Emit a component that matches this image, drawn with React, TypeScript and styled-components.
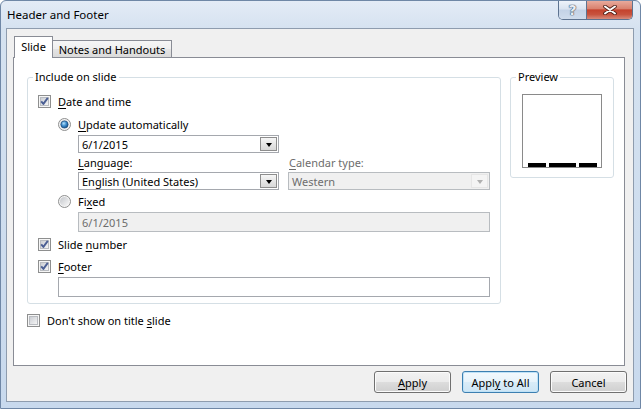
import React from 'react';
import styled, { createGlobalStyle } from 'styled-components';

const GlobalStyle = createGlobalStyle`
    * { box-sizing: border-box; }
    html, body { margin: 0; padding: 0; background: #ffffff; }
    body {
        font-family: 'Noto Sans', 'Open Sans', 'Liberation Sans', sans-serif;
        font-size: 11px;
        color: #000;
    }
    u { text-underline-offset: 2px; }
`;

const Window = styled.div`
    width: 641px;
    height: 409px;
    display: flex;
    flex-direction: column;
    border: 1px solid #6f87a6;
    border-radius: 6px 6px 0 0;
    background: linear-gradient(180deg, #e3ebf6 0px, #d5e2f0 28px, #c8d9ed 100%);
    overflow: hidden;
`;

const TitleBar = styled.div`
    flex: none;
    height: 27px;
    display: flex;
    align-items: flex-start;
`;

const Title = styled.div`
    align-self: center;
    padding-left: 6px;
    font-size: 11.5px;
    line-height: 16px;
`;

const CaptionButtons = styled.div`
    margin-left: auto;
    margin-right: 7px;
    display: flex;
    height: 19px;
    border: 1px solid #5d7390;
    border-top: none;
    border-radius: 0 0 5px 5px;
    overflow: hidden;
`;

const HelpButton = styled.div`
    width: 28px;
    border-right: 1px solid #5d7390;
    display: flex;
    align-items: center;
    justify-content: center;
    background: linear-gradient(180deg, #eef3fa 0%, #d9e3f0 45%, #c3d2e6 50%, #cfdcec 100%);
    color: #e9edf3;
    font-family: 'DejaVu Sans', sans-serif;
    font-weight: bold;
    font-size: 14px;
    line-height: 1;
    text-shadow: 0 0 1px #3e4e64, 0 0 1px #3e4e64, 0 0 1px #3e4e64;
`;

const CloseButton = styled.div`
    width: 45px;
    display: flex;
    align-items: center;
    justify-content: center;
    background: linear-gradient(180deg, #e8aa9c 0%, #d9826f 42%, #c4432e 50%, #c8533e 75%, #d78b7b 100%);
`;

const Client = styled.div`
    flex: 1;
    margin: 0 6px 6px 5px;
    border: 1px solid #8e9cae;
    background: #f0f0f0;
    display: flex;
    flex-direction: column;
    padding: 7px 0 0 6px;
`;

const TabStrip = styled.div`
    height: 21px;
    display: flex;
    align-items: flex-end;
    padding-left: 1px;
`;

const Tab = styled.div<{ $active?: boolean }>`
    position: relative;
    z-index: 1;
    display: flex;
    align-items: center;
    justify-content: center;
    border: 1px solid #898c95;
    border-bottom: none;
    height: ${p => (p.$active ? '22px' : '17px')};
    margin-bottom: ${p => (p.$active ? '-1px' : '0')};
    padding: ${p => (p.$active ? '0 0 2px' : '1px 0 0')};
    width: ${p => (p.$active ? '39px' : '119px')};
    border-left: ${p => (p.$active ? '1px solid #898c95' : 'none')};
    background: ${p => (p.$active ? '#ffffff' : 'linear-gradient(180deg, #f6f6f6 0%, #efefef 50%, #e4e4e4 51%, #dadada 100%)')};
`;

const Panel = styled.div`
    width: 612px;
    height: 309px;
    border: 1px solid #898c95;
    background: #ffffff;
    padding: 12px 0 0 13px;
    display: grid;
    grid-template-columns: 474px 104px;
    column-gap: 9px;
    align-content: start;
    align-items: start;
`;

const Group = styled.fieldset`
    margin: 0;
    padding: 0;
    min-width: 0;
    border: 1px solid #d5dfe5;
    border-radius: 3px;
`;

const Legend = styled.legend`
    margin-left: 5px;
    padding: 0 2px;
    line-height: 14px;
`;

const GroupBody = styled.div<{ $pad: string }>`
    display: flex;
    flex-direction: column;
    padding: ${p => p.$pad};
`;

const OptionRow = styled.label<{ $indent?: number; $gap?: number }>`
    display: flex;
    align-items: center;
    gap: 7px;
    height: 22px;
    margin-left: ${p => p.$indent ?? 0}px;
    margin-top: ${p => p.$gap ?? 0}px;
`;

const FieldGrid = styled.div`
    margin-left: 40px;
    display: grid;
    grid-template-columns: 201px 202px;
    column-gap: 9px;
`;

const FieldLabel = styled.div<{ $disabled?: boolean }>`
    height: 19px;
    display: flex;
    align-items: center;
    padding-left: ${p => (p.$disabled ? '1px' : '0')};
    color: ${p => (p.$disabled ? '#6d6d6d' : '#000')};
`;

const Combo = styled.div<{ $disabled?: boolean; $indent?: number; $width?: number }>`
    display: flex;
    align-items: center;
    height: 18px;
    width: ${p => (p.$width ? `${p.$width}px` : 'auto')};
    margin-left: ${p => p.$indent ?? 0}px;
    border: 1px solid ${p => (p.$disabled ? '#b8bcc0' : '#a5a8ae')};
    background: ${p => (p.$disabled ? '#f0f0f0' : '#ffffff')};
    color: ${p => (p.$disabled ? '#6d6d6d' : '#000')};
    padding-left: 3px;
`;

const ComboText = styled.span`
    flex: 1;
    white-space: nowrap;
`;

const ArrowButton = styled.div<{ $disabled?: boolean }>`
    width: 17px;
    height: 14px;
    margin-right: 1px;
    display: flex;
    align-items: center;
    justify-content: center;
    border: 1px solid ${p => (p.$disabled ? '#e6e6e6' : '#8d8d8d')};
    background: ${p => (p.$disabled ? '#f4f4f4' : 'linear-gradient(180deg, #f6f6f6 0%, #e6e6e6 50%, #d8d8d8 100%)')};
`;

const Arrow = styled.span<{ $disabled?: boolean }>`
    width: 0;
    height: 0;
    border-left: 3.5px solid transparent;
    border-right: 3.5px solid transparent;
    border-top: 4px solid ${p => (p.$disabled ? '#b0b0b0' : '#000')};
    margin-top: 1px;
`;

const TextBox = styled.div<{ $disabled?: boolean; $indent: number }>`
    height: 20px;
    margin-left: ${p => p.$indent}px;
    display: flex;
    align-items: center;
    padding-left: 3px;
    border: 1px solid ${p => (p.$disabled ? '#b8bcc0' : '#a5a8ae')};
    background: ${p => (p.$disabled ? '#f0f0f0' : '#ffffff')};
    color: #6d6d6d;
`;

const PreviewPage = styled.div`
    width: 80px;
    height: 74px;
    border: 1px solid #8a8a8a;
    background: #ffffff;
    display: flex;
    align-items: flex-end;
    gap: 3px;
    padding-left: 5px;
`;

const FooterBar = styled.div<{ $w: number }>`
    width: ${p => p.$w}px;
    height: 4px;
    background: #000;
`;

const BottomRow = styled.label`
    grid-column: 1;
    display: flex;
    align-items: center;
    gap: 7px;
    height: 22px;
    margin-top: 5px;
`;

const ButtonRow = styled.div`
    display: flex;
    justify-content: flex-end;
    gap: 11px;
    margin-top: 5px;
    padding-right: 6px;
`;

const Button = styled.div<{ $default?: boolean }>`
    width: 77px;
    height: 22px;
    display: flex;
    align-items: center;
    justify-content: center;
    border-radius: 3px;
    border: 1px solid ${p => (p.$default ? '#3c7fb1' : '#707070')};
    background: ${p =>
        p.$default
            ? 'linear-gradient(180deg, #f3f9fd 0%, #e7f3fb 50%, #d9ecf8 51%, #cde5f5 100%)'
            : 'linear-gradient(180deg, #f2f2f2 0%, #ebebeb 50%, #dddddd 51%, #cfcfcf 100%)'};
    box-shadow: inset 0 0 0 1px ${p => (p.$default ? '#bfe2f7' : '#fbfbfb')};
`;

const CheckBox = ({ checked }: { checked?: boolean }) => (
    <svg width="13" height="13" viewBox="0 0 13 13">
        <defs>
            <linearGradient id="cbFill" x1="0" y1="0" x2="1" y2="1">
                <stop offset="0" stopColor="#c9ccd2" />
                <stop offset="1" stopColor="#f7f7f7" />
            </linearGradient>
        </defs>
        <rect x="0.5" y="0.5" width="12" height="12" fill="#f6f6f6" stroke="#8e8f8f" />
        <rect x="2.5" y="2.5" width="8" height="8" fill="url(#cbFill)" stroke="#b9bcc1" />
        {checked && (
            <path d="M3.2 6.3 L5.4 8.9 L9.8 2.9" fill="none" stroke="#4b5f94" strokeWidth="1.9" strokeLinejoin="round" />
        )}
    </svg>
);

const Radio = ({ checked }: { checked?: boolean }) => (
    <svg width="13" height="13" viewBox="0 0 13 13">
        <defs>
            <linearGradient id="rdFill" x1="0" y1="0" x2="1" y2="1">
                <stop offset="0" stopColor="#c4c7cc" />
                <stop offset="1" stopColor="#f8f8f8" />
            </linearGradient>
            <radialGradient id="rdDot" cx="0.4" cy="0.35" r="0.7">
                <stop offset="0" stopColor="#b6e2fb" />
                <stop offset="0.5" stopColor="#3d8ccd" />
                <stop offset="1" stopColor="#10477e" />
            </radialGradient>
        </defs>
        <circle cx="6.5" cy="6.5" r="6" fill="#f4f4f4" stroke="#8e8f8f" />
        <circle cx="6.5" cy="6.5" r="4.5" fill="url(#rdFill)" />
        {checked && <circle cx="6.5" cy="6.5" r="3.6" fill="url(#rdDot)" stroke="#1b4c7c" strokeWidth="0.7" />}
    </svg>
);

const CloseGlyph = () => (
    <svg width="14" height="10" viewBox="0 0 14 10">
        <path d="M2 1.5 L12 8.5 M12 1.5 L2 8.5" stroke="#4b1d15" strokeWidth="3.6" strokeLinecap="round" />
        <path d="M2 1.5 L12 8.5 M12 1.5 L2 8.5" stroke="#ffffff" strokeWidth="2" strokeLinecap="round" />
    </svg>
);

const previewBars = [18, 27, 18];

const App = () => {
    return (
        <>
            <GlobalStyle />
            <Window>
                <TitleBar>
                    <Title>Header and Footer</Title>
                    <CaptionButtons>
                        <HelpButton>?</HelpButton>
                        <CloseButton>
                            <CloseGlyph />
                        </CloseButton>
                    </CaptionButtons>
                </TitleBar>
                <Client>
                    <TabStrip>
                        <Tab $active>Slide</Tab>
                        <Tab>Notes and Handouts</Tab>
                    </TabStrip>
                    <Panel>
                        <Group>
                            <Legend>Include on slide</Legend>
                            <GroupBody $pad="6px 10px 6px 10px">
                                <OptionRow>
                                    <CheckBox checked />
                                    <span>
                                        <u>D</u>ate and time
                                    </span>
                                </OptionRow>
                                <OptionRow $indent={20} $gap={1}>
                                    <Radio checked />
                                    <span>
                                        <u>U</u>pdate automatically
                                    </span>
                                </OptionRow>
                                <Combo $indent={40} $width={201}>
                                    <ComboText>6/1/2015</ComboText>
                                    <ArrowButton>
                                        <Arrow />
                                    </ArrowButton>
                                </Combo>
                                <FieldGrid>
                                    <FieldLabel>
                                        <span>
                                            <u>L</u>anguage:
                                        </span>
                                    </FieldLabel>
                                    <FieldLabel $disabled>
                                        <span>
                                            <u>C</u>alendar type:
                                        </span>
                                    </FieldLabel>
                                    <Combo>
                                        <ComboText>English (United States)</ComboText>
                                        <ArrowButton>
                                            <Arrow />
                                        </ArrowButton>
                                    </Combo>
                                    <Combo $disabled>
                                        <ComboText>Western</ComboText>
                                        <ArrowButton $disabled>
                                            <Arrow $disabled />
                                        </ArrowButton>
                                    </Combo>
                                </FieldGrid>
                                <OptionRow $indent={20}>
                                    <Radio />
                                    <span>
                                        Fi<u>x</u>ed
                                    </span>
                                </OptionRow>
                                <TextBox $indent={40} $disabled>
                                    6/1/2015
                                </TextBox>
                                <OptionRow $gap={1}>
                                    <CheckBox checked />
                                    <span>
                                        Slide <u>n</u>umber
                                    </span>
                                </OptionRow>
                                <OptionRow>
                                    <CheckBox checked />
                                    <span>
                                        <u>F</u>ooter
                                    </span>
                                </OptionRow>
                                <TextBox $indent={20} />
                            </GroupBody>
                        </Group>
                        <Group>
                            <Legend>Preview</Legend>
                            <GroupBody $pad="10px 0 9px 11px">
                                <PreviewPage>
                                    {previewBars.map((w, i) => (
                                        <FooterBar key={i} $w={w} />
                                    ))}
                                </PreviewPage>
                            </GroupBody>
                        </Group>
                        <BottomRow>
                            <CheckBox />
                            <span>
                                Don't show on title <u>s</u>lide
                            </span>
                        </BottomRow>
                    </Panel>
                    <ButtonRow>
                        <Button>
                            <span>
                                <u>A</u>pply
                            </span>
                        </Button>
                        <Button $default>
                            <span>
                                Appl<u>y</u> to All
                            </span>
                        </Button>
                        <Button>Cancel</Button>
                    </ButtonRow>
                </Client>
            </Window>
        </>
    );
};

export default App;
